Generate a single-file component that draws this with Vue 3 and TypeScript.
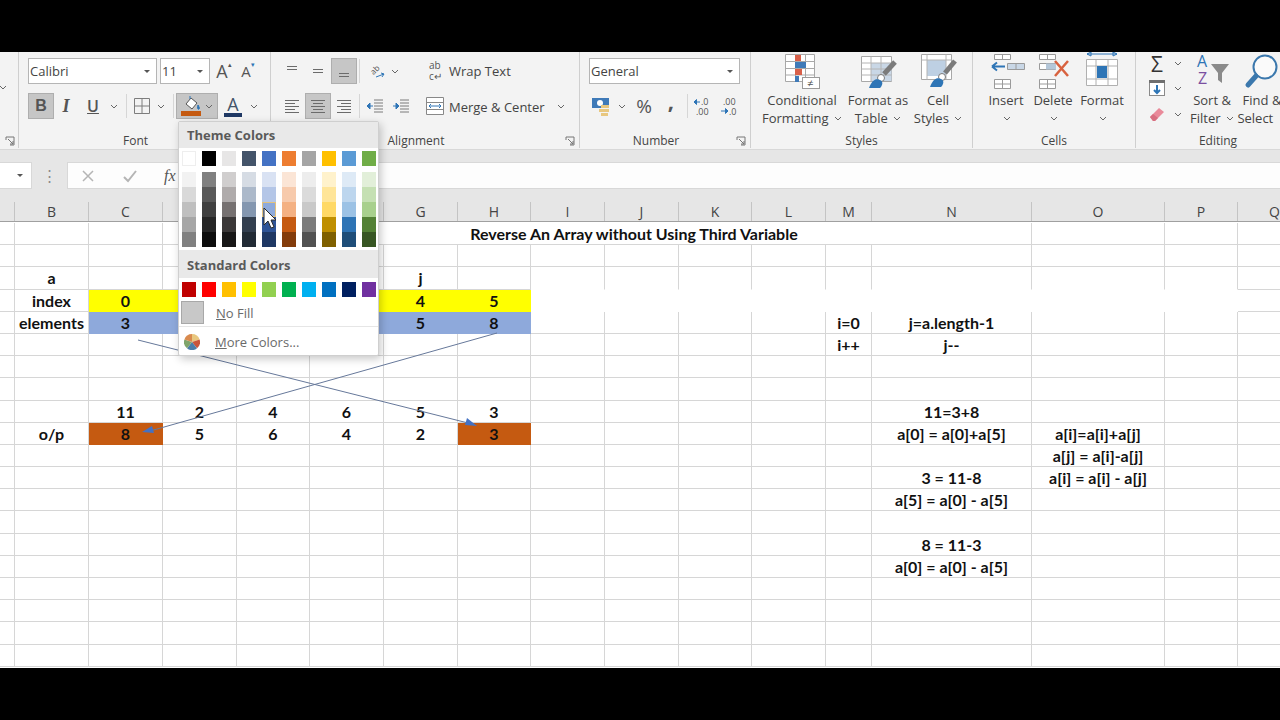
<template>
  <div class="page">
    <div class="black-bar"></div>

    <div class="ribbon">
      <section class="group clipboard">
        <div class="group-body paste"><svg class="chev" viewBox="0 0 8 5"><path d="M1 1l3 3 3-3" /></svg></div>
        <div class="group-foot"><span class="label"></span>
          <svg class="launcher" viewBox="0 0 10 10"><path d="M1 4V1h8v8H5M3 3l5 5M8 5v3H5" /></svg>
        </div>
      </section>

      <section class="group font-group">
        <div class="group-body stack">
          <div class="row">
            <div class="select font-name"><span>Calibri</span><i class="caret"></i></div>
            <div class="select font-size"><span>11</span><i class="caret"></i></div>
            <div class="tool grow-a">A<sup>▴</sup></div>
            <div class="tool shrink-a">A<sup class="blue">▾</sup></div>
          </div>
          <div class="row">
            <div class="tool active bold">B</div>
            <div class="tool italic">I</div>
            <div class="tool under">U</div>
            <svg class="chev mid" viewBox="0 0 8 5"><path d="M1 1l3 3 3-3" /></svg>
            <div class="sep font-sep"></div>
            <div class="tool">
              <svg width="16" height="16" viewBox="0 0 16 16"><path d="M.5.5h15v15H.5zM8 .5v15M.5 8h15" fill="none" stroke="#7d7d7d" /></svg>
            </div>
            <svg class="chev" viewBox="0 0 8 5"><path d="M1 1l3 3 3-3" /></svg>
            <div class="sep fill-sep"></div>
            <div class="tool active fill-btn">
              <svg width="22" height="22" viewBox="0 0 22 22">
                <path d="M6 9l5-6 6 5-5 6z" fill="#fff" stroke="#555" />
                <path d="M10 4V1M18 10c1 2 2 3 1 4s-2-1-1-4z" fill="#2e75b6" stroke="#2e75b6" />
                <rect x="1" y="16" width="20" height="5" fill="#c55a11" />
              </svg>
              <svg class="chev" viewBox="0 0 8 5"><path d="M1 1l3 3 3-3" /></svg>
            </div>
            <div class="tool font-colour">
              <span>A</span><b></b>
            </div>
            <svg class="chev colour-chev" viewBox="0 0 8 5"><path d="M1 1l3 3 3-3" /></svg>
          </div>
        </div>
        <div class="group-foot"><span class="label">Font</span><i class="launcher-gap"></i></div>
      </section>

      <section class="group align-group">
        <div class="group-body stack">
          <div class="row">
            <div v-for="(pos, i) in vAligns" :key="pos" class="tool" :class="{ active: i === 2 }">
              <svg width="16" height="16" viewBox="0 0 16 16">
                <path :d="pos" fill="none" stroke="#6b6b6b" />
              </svg>
            </div>
            <div class="sep align-sep"></div>
            <div class="tool orient">
              <svg class="open-svg" width="18" height="18" viewBox="0 0 18 18">
                <text x="2" y="11" font-size="8" fill="#555" transform="rotate(-45 6 9)">ab</text>
                <path d="M7 15l8-3M15 12l-3-1M15 12l-2 3" fill="none" stroke="#2e75b6" />
              </svg>
            </div>
            <svg class="chev orient-chev" viewBox="0 0 8 5"><path d="M1 1l3 3 3-3" /></svg>
            <div class="wrap-icon"><span>ab</span><span>c↵</span></div>
            <span class="wide-text">Wrap Text</span>
          </div>
          <div class="row">
            <div v-for="(lines, i) in hAligns" :key="lines" class="tool" :class="{ active: i === 1 }">
              <svg width="16" height="16" viewBox="0 0 16 16">
                <path :d="lines" fill="none" stroke="#6b6b6b" />
              </svg>
            </div>
            <div class="sep align-sep"></div>
            <div class="tool">
              <svg width="18" height="14" viewBox="0 0 18 14">
                <path d="M8 1h9M8 4h9M8 7h9M8 10h9M8 13h9" stroke="#7a7a7a" />
                <path d="M1 7h6M1 7l3-3v6z" stroke="#2e75b6" fill="#2e75b6" />
              </svg>
            </div>
            <div class="tool">
              <svg width="18" height="14" viewBox="0 0 18 14">
                <path d="M8 1h9M8 4h9M8 7h9M8 10h9M8 13h9" stroke="#7a7a7a" />
                <path d="M1 7h5M7 7L4 4v6z" stroke="#2e75b6" fill="#2e75b6" />
              </svg>
            </div>
            <svg class="merge-icon" viewBox="0 0 18 18">
              <path d="M.5.5h17v17H.5zM.5 5.500h17M.5 12.500h17" fill="#fff" stroke="#888" />
              <path d="M3 9h12M3 9l2-2M3 9l2 2M15 9l-2-2M15 9l-2 2" fill="none" stroke="#2e75b6" />
            </svg>
            <span class="wide-text low">Merge &amp; Center</span>
            <svg class="chev merge-chev" viewBox="0 0 8 5"><path d="M1 1l3 3 3-3" /></svg>
          </div>
        </div>
        <div class="group-foot"><span class="label">Alignment</span>
          <svg class="launcher" viewBox="0 0 10 10"><path d="M1 4V1h8v8H5M3 3l5 5M8 5v3H5" /></svg>
        </div>
      </section>

      <section class="group number-group">
        <div class="group-body stack">
          <div class="row">
            <div class="select number-format"><span>General</span><i class="caret"></i></div>
          </div>
          <div class="row">
            <div class="tool currency">
              <svg width="20" height="20" viewBox="0 0 20 20">
                <rect x="1" y="2" width="17" height="10" fill="#3f7ab8" />
                <circle cx="9" cy="7" r="3" fill="#fff" />
                <rect x="10" y="9" width="8" height="3" fill="#e8c77f" />
                <rect x="8" y="13" width="10" height="3" fill="#e8c77f" />
                <rect x="10" y="17" width="7" height="3" fill="#e8c77f" />
              </svg>
            </div>
            <svg class="chev currency-chev" viewBox="0 0 8 5"><path d="M1 1l3 3 3-3" /></svg>
            <div class="tool percent">%</div>
            <div class="tool comma">,</div>
            <div class="sep number-sep"></div>
            <div class="tool decimals">
              <svg class="open-svg" width="22" height="24" viewBox="0 0 22 24">
                <text x="9" y="11" font-size="9">.0</text>
                <text x="4" y="21" font-size="9">.00</text>
                <path d="M2 8h6M2 8l2.500-2.500v5z" stroke="#2e75b6" fill="#2e75b6" />
              </svg>
            </div>
            <div class="tool decimals">
              <svg class="open-svg" width="22" height="24" viewBox="0 0 22 24">
                <text x="5" y="11" font-size="9">.00</text>
                <text x="11" y="21" font-size="9">.0</text>
                <path d="M3 17h6M10 17l-2.500-2.500v5z" stroke="#2e75b6" fill="#2e75b6" />
              </svg>
            </div>
          </div>
        </div>
        <div class="group-foot"><span class="label">Number</span>
          <svg class="launcher" viewBox="0 0 10 10"><path d="M1 4V1h8v8H5M3 3l5 5M8 5v3H5" /></svg>
        </div>
      </section>

      <section class="group styles-group">
        <div class="group-body big-row">
          <div class="big" style="width: 86px">
            <svg class="big-icon" viewBox="0 0 38 38">
              <path d="M2.500 2.500h29v27h-29zM12.500 2.500v27M22.500 2.500v27M2.500 9.500h29M2.500 16.500h29M2.500 23h29" fill="#fff" stroke="#a8a8a8" />
              <rect x="12" y="3" width="6" height="6" fill="#d8604a" />
              <rect x="12" y="10" width="11" height="6" fill="#3f7ab8" />
              <rect x="12" y="17" width="7" height="6" fill="#d8604a" />
              <rect x="12" y="24" width="4" height="6" fill="#3f7ab8" />
              <rect x="19.500" y="25.500" width="17" height="11" fill="#fff" stroke="#9a9a9a" />
              <text x="24" y="35" font-size="11" fill="#555">≠</text>
            </svg>
            <span>Conditional</span>
            <span>Formatting <svg class="chev" viewBox="0 0 8 5"><path d="M1 1l3 3 3-3" /></svg></span>
          </div>
          <div class="big" style="width: 66px">
            <svg class="big-icon" viewBox="0 0 38 38">
              <path d="M2.500 4.500h30v25h-30z" fill="#fff" stroke="#a8a8a8" />
              <path d="M12 11h20.500v18H12z" fill="#c9d7e6" />
              <path d="M2.500 11h30M2.500 17h30M2.500 23h30M12 4.500v25M22 4.500v25" fill="none" stroke="#b4b4b4" />
              <path d="M36 10L25 22" stroke="#7b7b7b" stroke-width="5" />
              <circle cx="22" cy="26" r="3.500" fill="#fff" stroke="#7b7b7b" />
              <path d="M10 36c3-8 7-10 11-8s2 6 0 8z" fill="#2e75b6" />
            </svg>
            <span>Format as</span>
            <span>Table <svg class="chev" viewBox="0 0 8 5"><path d="M1 1l3 3 3-3" /></svg></span>
          </div>
          <div class="big" style="width: 54px">
            <svg class="big-icon" viewBox="0 0 38 38">
              <path d="M2.500 2.500h30v25h-30z" fill="#fff" stroke="#a8a8a8" />
              <path d="M8 8h19v16H8z" fill="#bed0e3" />
              <path d="M2.500 8h30M8 2.500v25M27 2.500v25" fill="none" stroke="#b4b4b4" />
              <path d="M36 9L26 21" stroke="#7b7b7b" stroke-width="5" />
              <circle cx="23" cy="25" r="3.500" fill="#fff" stroke="#7b7b7b" />
              <path d="M11 35c3-8 7-10 11-8s2 6 0 8z" fill="#2e75b6" />
            </svg>
            <span>Cell</span>
            <span>Styles <svg class="chev" viewBox="0 0 8 5"><path d="M1 1l3 3 3-3" /></svg></span>
          </div>
        </div>
        <div class="group-foot"><span class="label">Styles</span></div>
      </section>

      <section class="group cells-group">
        <div class="group-body big-row">
          <div class="big" style="width: 48px">
            <svg class="big-icon" viewBox="0 0 38 38">
              <path d="M7.500 2.500h16v5h-16zM15.500 2.500v5M7.500 27.500h16v9h-16zM15.500 27.500v9M7.500 32h16" fill="#fff" stroke="#9a9a9a" />
              <path d="M20.500 11.500h17v6h-17zM29 11.500v6" fill="#c9d7e6" stroke="#9a9a9a" />
              <path d="M5 14.500h13M5 14.500l5-4M5 14.500l5 4" fill="none" stroke="#2e75b6" stroke-width="2" />
            </svg>
            <span>Insert</span>
            <span><svg class="chev" viewBox="0 0 8 5"><path d="M1 1l3 3 3-3" /></svg></span>
          </div>
          <div class="big" style="width: 46px">
            <svg class="big-icon" viewBox="0 0 38 38">
              <path d="M5.500 2.500h16v5h-16zM13.500 2.500v5M5.500 27.500h16v9h-16zM13.500 27.500v9M5.500 32h16" fill="#fff" stroke="#9a9a9a" />
              <path d="M5.500 11.500h16v6h-16z" fill="#fff" stroke="#9a9a9a" />
              <path d="M12 11.500h10v6H12z" fill="#b4c7d9" />
              <path d="M21 9l13 15M34 9L21 24" stroke="#d8623f" stroke-width="2.500" />
            </svg>
            <span>Delete</span>
            <span><svg class="chev" viewBox="0 0 8 5"><path d="M1 1l3 3 3-3" /></svg></span>
          </div>
          <div class="big" style="width: 52px">
            <svg class="big-icon" viewBox="0 0 38 38">
              <path d="M4 2h30M8 0v4M30 0v4M4 2l4-2M4 2l4 2M34 2l-4-2M34 2l-4 2" fill="none" stroke="#2e75b6" />
              <path d="M3.500 7.500h31v26h-31zM13 7.500v26M25 7.500v26M3.500 14h31M3.500 27h31" fill="#fff" stroke="#b0b0b0" />
              <rect x="14" y="14" width="10" height="12" fill="#2e75b6" />
            </svg>
            <span>Format</span>
            <span><svg class="chev" viewBox="0 0 8 5"><path d="M1 1l3 3 3-3" /></svg></span>
          </div>
        </div>
        <div class="group-foot"><span class="label">Cells</span></div>
      </section>

      <section class="group editing-group">
        <div class="group-body big-row">
          <div class="edit-tools">
            <div class="edit-line sum"><span class="sigma">Σ</span><svg class="chev" viewBox="0 0 8 5"><path d="M1 1l3 3 3-3" /></svg></div>
            <div class="edit-line">
              <svg class="edit-icon" viewBox="0 0 16 16">
                <rect x=".5" y=".5" width="15" height="15" fill="#fff" stroke="#8a8a8a" />
                <rect x="0" y="0" width="16" height="3" fill="#6f6f6f" />
                <path d="M8 5v8M5 10l3 3 3-3" fill="none" stroke="#2e75b6" stroke-width="2" />
              </svg>
              <svg class="chev" viewBox="0 0 8 5"><path d="M1 1l3 3 3-3" /></svg>
            </div>
            <div class="edit-line">
              <svg class="edit-icon" viewBox="0 0 16 16"><path d="M1 11l9-9 5 4-9 9H4z" fill="#e98a9a" /><path d="M1 11l3-3 5 4-3 3H4z" fill="#d76f80" /></svg>
              <svg class="chev" viewBox="0 0 8 5"><path d="M1 1l3 3 3-3" /></svg>
            </div>
          </div>
          <div class="big" style="width: 52px">
            <svg class="big-icon open-svg" viewBox="0 0 38 38">
              <text x="4" y="15" font-size="16" fill="#2e75b6">A</text>
              <text x="5" y="32" font-size="16" fill="#7b4fa0">Z</text>
              <path d="M18 12h18l-7 9v10l-4-3v-7z" fill="#8a8a8a" />
            </svg>
            <span>Sort &amp;</span>
            <span>Filter <svg class="chev" viewBox="0 0 8 5"><path d="M1 1l3 3 3-3" /></svg></span>
          </div>
          <div class="big" style="width: 48px">
            <svg class="big-icon" viewBox="0 0 38 38">
              <circle cx="22" cy="15" r="11.500" fill="#fff" fill-opacity=".6" stroke="#3b78ad" stroke-width="2" />
              <path d="M13 24L5 33" stroke="#3b78ad" stroke-width="5" stroke-linecap="round" />
            </svg>
            <span>Find &amp;</span>
            <span>Select <svg class="chev" viewBox="0 0 8 5"><path d="M1 1l3 3 3-3" /></svg></span>
          </div>
        </div>
        <div class="group-foot"><span class="label">Editing</span></div>
      </section>
    </div>

    <div class="formula">
      <div class="name-box"><i class="caret"></i></div>
      <div class="dots">⋮</div>
      <div class="formula-box">
        <svg class="f-icon" viewBox="0 0 14 14"><path d="M2 2l10 10M12 2L2 12" stroke="#b5b5b5" stroke-width="1.500" /></svg>
        <svg class="f-icon check" viewBox="0 0 16 14"><path d="M2 8l4 4 8-10" fill="none" stroke="#b5b5b5" stroke-width="2" /></svg>
        <span class="fx">fx</span>
      </div>
    </div>

    <div class="col-head sheet-cols">
      <div v-for="col in columns" :key="col" class="head-cell">{{ col }}</div>
    </div>

    <div class="sheet sheet-cols">
      <div v-for="cell in cells" :key="cell.key" class="cell" :class="cell.classes">{{ cell.text }}</div>
    </div>

    <div class="black-bar"></div>

    <svg class="arrows" viewBox="0 0 1280 720">
      <path d="M138 340L472 424" stroke="#66789a" stroke-width="1" fill="none" />
      <path d="M477 426l-10-8-2 7z" fill="#4472c4" />
      <path d="M497 333L150 431" stroke="#66789a" stroke-width="1" fill="none" />
      <path d="M142 432l10-6 2 7z" fill="#4472c4" />
    </svg>

    <div class="fill-menu">
      <div class="menu-title">Theme Colors</div>
      <div class="swatches base-row">
        <i v-for="col in themeColors" :key="col.base" class="swatch" :class="{ blank: col.base === '#ffffff' }" :style="{ background: col.base }"></i>
      </div>
      <div class="swatches tint-row">
        <div v-for="(col, c) in themeColors" :key="col.base" class="tint-col">
          <i v-for="(tint, t) in col.tints" :key="t" class="tint" :class="{ hover: c === 4 && t === 2 }" :style="{ background: tint }"></i>
        </div>
      </div>
      <div class="menu-title second">Standard Colors</div>
      <div class="swatches std-row">
        <i v-for="colour in standardColors" :key="colour" class="swatch" :style="{ background: colour }"></i>
      </div>
      <div class="menu-item no-fill">
        <i class="no-fill-box"></i>
        <span><u>N</u>o Fill</span>
      </div>
      <div class="menu-item more">
        <svg class="wheel" viewBox="0 0 16 16">
          <path d="M8 8V0a8 8 0 0 1 7.600 5.500z" fill="#e8c77f" />
          <path d="M8 8l7.600-2.500A8 8 0 0 1 13 14.200z" fill="#c9563a" />
          <path d="M8 8l5 6.200A8 8 0 0 1 3 14.200z" fill="#4b7ea8" />
          <path d="M8 8l-5 6.200A8 8 0 0 1 .4 5.500z" fill="#7fa46a" />
          <path d="M8 8L.4 5.500A8 8 0 0 1 8 0z" fill="#d98a4e" />
        </svg>
        <span><u>M</u>ore Colors...</span>
      </div>
    </div>

    <svg class="cursor" viewBox="0 0 14 22">
      <path d="M1 1v17l4-4 3 7 3-1-3-7h5z" fill="#fff" stroke="#2b2b2b" stroke-width="1" />
    </svg>
  </div>
</template>

<script setup lang="ts">
import { computed } from 'vue';

interface Cell {
  key: string;
  text: string;
  classes: string[];
}

const columns = ['', 'B', 'C', 'D', 'E', 'F', 'G', 'H', 'I', 'J', 'K', 'L', 'M', 'N', 'O', 'P', 'Q'];
const rowCount = 20;

const vAligns = ['M3 3.500h10M3 6.500h10', 'M3 6.500h10M3 9.500h10', 'M3 10.500h10M3 13.500h10'];
const hAligns = [
  'M1 2.500h14M1 5.500h10M1 8.500h14M1 11.500h10M1 14.500h14',
  'M1 2.500h14M3 5.500h10M1 8.500h14M3 11.500h10M1 14.500h14',
  'M1 2.500h14M5 5.500h10M1 8.500h14M5 11.500h10M1 14.500h14',
];

const sheetData: Record<number, Record<string, string>> = {
  2: { B: 'a', G: 'j' },
  3: { B: 'index', C: '0', D: '1', E: '2', F: '3', G: '4', H: '5' },
  4: { B: 'elements', C: '3', D: '2', E: '4', F: '6', G: '5', H: '8', M: 'i=0', N: 'j=a.length-1' },
  5: { M: 'i++', N: 'j--' },
  8: { C: '11', D: '2', E: '4', F: '6', G: '5', H: '3', N: '11=3+8' },
  9: { B: 'o/p', C: '8', D: '5', E: '6', F: '4', G: '2', H: '3', N: 'a[0] = a[0]+a[5]', O: 'a[i]=a[i]+a[j]' },
  10: { O: 'a[j] = a[i]-a[j]' },
  11: { N: '3 = 11-8', O: 'a[i] = a[i] - a[j]' },
  12: { N: 'a[5] = a[0] - a[5]' },
  14: { N: '8 = 11-3' },
  15: { N: 'a[0] = a[0] - a[5]' },
};

const filled = 'CDEFGH';
const cleared = 'IJKLMNOP';

function cellClasses(row: number, col: string): string[] {
  const list: string[] = [];
  if (row === 3 && filled.includes(col) && col) list.push('yellow');
  if (row === 4 && filled.includes(col) && col) list.push('blue');
  if (row === 9 && (col === 'C' || col === 'H')) list.push('orange');
  if (row === 3 && cleared.includes(col) && col) list.push('cleared');
  if (row === 2 && cleared.includes(col) && col) list.push('no-bottom');
  return list;
}

// row 0 holds the merged title across E..N
const cells = computed<Cell[]>(() => {
  const out: Cell[] = [];
  for (let row = 0; row < rowCount; row++) {
    for (const col of columns) {
      if (row === 0 && 'FGHIJKLMN'.includes(col) && col) continue;
      if (row === 0 && col === 'E') {
        out.push({ key: 'title', text: 'Reverse An Array without Using Third Variable', classes: ['title'] });
        continue;
      }
      out.push({ key: `${col || 'A'}${row}`, text: sheetData[row]?.[col] ?? '', classes: cellClasses(row, col) });
    }
  }
  return out;
});

const themeColors = [
  { base: '#ffffff', tints: ['#f2f2f2', '#d9d9d9', '#bfbfbf', '#a6a6a6', '#808080'] },
  { base: '#000000', tints: ['#808080', '#595959', '#404040', '#262626', '#0d0d0d'] },
  { base: '#e7e6e6', tints: ['#d0cece', '#afabab', '#767171', '#3b3838', '#181717'] },
  { base: '#44546a', tints: ['#d6dce4', '#acb9ca', '#8497b0', '#333f4f', '#222b35'] },
  { base: '#4472c4', tints: ['#d9e2f3', '#b4c6e7', '#8eaadb', '#2f5496', '#1f3864'] },
  { base: '#ed7d31', tints: ['#fbe5d6', '#f7caac', '#f4b183', '#c55a11', '#833c0b'] },
  { base: '#a5a5a5', tints: ['#ededed', '#dbdbdb', '#c9c9c9', '#7b7b7b', '#525252'] },
  { base: '#ffc000', tints: ['#fff2cc', '#ffe599', '#ffd966', '#bf8f00', '#7f6000'] },
  { base: '#5b9bd5', tints: ['#deeaf6', '#bdd6ee', '#9cc2e5', '#2e74b5', '#1f4e79'] },
  { base: '#70ad47', tints: ['#e2efd9', '#c5e0b3', '#a8d08d', '#538135', '#375623'] },
];

const standardColors = ['#c00000', '#ff0000', '#ffc000', '#ffff00', '#92d050', '#00b050', '#00b0f0', '#0070c0', '#002060', '#7030a0'];
</script>

<style>
body {
  margin: 0;
  background: #000;
}
</style>

<style scoped>
.page {
  position: relative;
  display: flex;
  flex-direction: column;
  width: 1280px;
  height: 720px;
  overflow: hidden;
  font-family: "Open Sans", "Noto Sans", sans-serif;
  color: #444;
  background: #fff;
}

.black-bar {
  flex: none;
  height: 52px;
  background: #000;
}

.ribbon {
  display: flex;
  flex: none;
  height: 98px;
  overflow: hidden;
  background: #f3f3f3;
  border-bottom: 1px solid #d8d8d8;
  box-sizing: border-box;
}

.group {
  display: flex;
  flex: none;
  flex-direction: column;
  height: 96px;
  box-sizing: border-box;
  border-right: 1px solid #cfcfcf;
}

.clipboard { width: 19px; }
.font-group { width: 252px; }
.align-group { width: 309px; }
.number-group { width: 171px; }
.styles-group { width: 222px; }
.cells-group { width: 163px; }
.editing-group { width: 164px; border-right: 0; }

.group-body {
  height: 82px;
}

.open-svg { overflow: visible; }

.paste {
  padding-top: 33px;
  box-sizing: border-box;
}

.paste .chev {
  display: block;
  margin: 0 0 0 -1px;
}

.stack {
  display: flex;
  flex-direction: column;
  gap: 9px;
  padding-top: 6px;
  box-sizing: border-box;
}

.font-group .stack { padding-left: 9px; }
.align-group .stack { padding-left: 8px; }
.number-group .stack { padding-left: 9px; }

.row {
  display: flex;
  align-items: center;
  height: 26px;
}

.group-foot {
  display: flex;
  align-items: center;
  height: 14px;
}

.label {
  flex: 1;
  font-size: 12px;
  line-height: 14px;
  text-align: center;
  color: #444;
}

.launcher {
  flex: none;
  width: 10px;
  height: 10px;
  margin: 0 4px;
  fill: none;
  stroke: #777;
}

.clipboard .launcher { margin: 0 4px 0 5px; }

.launcher-gap {
  flex: none;
  width: 18px;
}

.select {
  display: flex;
  align-items: center;
  justify-content: space-between;
  height: 26px;
  padding: 0 4px 0 1px;
  box-sizing: border-box;
  font-size: 13px;
  background: #fff;
  border: 1px solid #b5b5b5;
}

.font-name { width: 129px; }
.font-size { width: 50px; margin-left: 3px; }
.number-format { width: 151px; }

.caret {
  display: block;
  width: 0;
  height: 0;
  margin-right: 2px;
  border: 3px solid transparent;
  border-top: 3px solid #555;
  border-bottom: 0;
}

.tool {
  display: flex;
  flex: none;
  align-items: center;
  justify-content: center;
  width: 26px;
  height: 26px;
  box-sizing: border-box;
  color: #555;
}

.tool.active {
  background: #c6c6c6;
  border: 1px solid #aeaeae;
}

.grow-a {
  margin-left: 1px;
  font-size: 18px;
}

.shrink-a {
  margin-left: -2px;
  font-size: 15px;
}

.tool sup {
  font-size: 7px;
  line-height: 0;
  vertical-align: top;
  margin-top: -12px;
  color: #555;
}

.tool sup.blue { color: #2e75b6; }

.bold {
  font-family: "Liberation Sans", sans-serif;
  font-size: 16px;
  font-weight: 700;
}

.italic {
  margin-left: -1px;
  margin-right: 1px;
  font-family: "Liberation Serif", serif;
  font-size: 18px;
  font-style: italic;
  font-weight: 700;
}

.under {
  font-size: 16px;
  font-weight: 600;
  text-decoration: underline;
}

.chev {
  flex: none;
  width: 8px;
  height: 5px;
  margin: 0 2px;
  fill: none;
  stroke: #666;
}

.mid { margin-left: 4px; }
.colour-chev { margin-left: 4px; }

.sep {
  flex: none;
  width: 1px;
  height: 24px;
  background: #d6d6d6;
}

.font-sep { margin: 0 2px 0 6px; }
.fill-sep { margin: 0 2px 0 6px; }
.align-sep { margin: 0 2px 0 2px; }

.fill-btn {
  gap: 0;
  width: 42px;
  padding-left: 1px;
}

.fill-btn .chev { margin: 0 3px 0 3px; }

.font-colour {
  flex-direction: column;
  margin-left: 2px;
  font-size: 18px;
  line-height: 17px;
  font-weight: 500;
  color: #44546a;
}

.font-colour b {
  display: block;
  width: 18px;
  height: 4px;
  background: #1f3864;
}

.orient { margin-left: 3px; }
.orient-chev { margin-left: 0; }

.wrap-icon {
  display: flex;
  flex-direction: column;
  width: 16px;
  margin-left: 28px;
  font-size: 10px;
  line-height: 11px;
  color: #555;
}

.wide-text {
  margin-left: 4px;
  font-size: 13px;
  white-space: nowrap;
}

.low { margin-top: 2px; }

.merge-icon {
  flex: none;
  width: 18px;
  height: 18px;
  margin-left: 12px;
}

.merge-icon + .wide-text { margin-left: 5px; }
.merge-chev { margin-left: 12px; }

.currency-chev { margin-left: 5px; }

.percent {
  margin-left: 3px;
  font-size: 19px;
}

.comma {
  margin-left: 1px;
  font-size: 22px;
  font-weight: 700;
  line-height: 14px;
  align-items: flex-start;
}

.number-sep { margin: 0 2px 0 3px; }

.currency { width: 24px; }

.decimals text {
  font-family: "Open Sans", sans-serif;
  fill: #555;
}

.big-row {
  display: flex;
}

.styles-group .big-row { padding-left: 8px; }
.cells-group .big-row { padding-left: 9px; }
.editing-group .big-row { padding-left: 10px; }

.big {
  display: flex;
  flex: none;
  flex-direction: column;
  align-items: center;
  font-size: 13px;
  line-height: 18px;
  white-space: nowrap;
}

.big .chev { margin: 0 0 2px 2px; }

.big-icon {
  display: block;
  width: 38px;
  height: 38px;
  margin-bottom: 1px;
}

.edit-tools {
  display: flex;
  flex: none;
  flex-direction: column;
  width: 40px;
}

.edit-line {
  display: flex;
  align-items: center;
  height: 26px;
}

.edit-line .chev { margin-left: 6px; }

.sum { height: 23px; }

.sigma {
  width: 22px;
  font-size: 21px;
  line-height: 18px;
  text-align: center;
  color: #333;
}

.edit-icon {
  flex: none;
  width: 16px;
  height: 16px;
  margin: 0 3px;
}

.formula {
  display: flex;
  flex: none;
  height: 40px;
  padding-top: 12px;
  box-sizing: border-box;
  background: #e6e6e6;
}

.name-box {
  display: flex;
  align-items: center;
  justify-content: flex-end;
  width: 32px;
  height: 27px;
  padding-right: 6px;
  box-sizing: border-box;
  background: #fff;
  border: 1px solid #d8d8d8;
  border-left: 0;
}

.dots {
  width: 35px;
  font-size: 15px;
  line-height: 27px;
  text-align: center;
  color: #8a8a8a;
}

.formula-box {
  display: flex;
  flex: 1;
  align-items: center;
  height: 27px;
  box-sizing: border-box;
  background: #fdfdfd;
  border: 1px solid #d8d8d8;
  border-right: 0;
}

.f-icon {
  width: 14px;
  height: 14px;
  margin-left: 13px;
}

.check {
  width: 16px;
  margin-left: 27px;
}

.fx {
  margin-left: 26px;
  font-family: "Liberation Serif", serif;
  font-size: 16px;
  font-style: italic;
  color: #555;
}

.sheet-cols {
  display: grid;
  grid-template-columns: 15px 74px 74px 74px 73px 74px 74px 73px 74px 74px 73px 74px 46px 160px 133px 73px 74px;
}

.col-head {
  flex: none;
  height: 32px;
  padding-top: 12px;
  box-sizing: border-box;
  background: #e6e6e6;
  border-bottom: 1px solid #a0a0a0;
}

.head-cell {
  font-size: 14px;
  line-height: 19px;
  text-align: center;
  color: #444;
  border-right: 1px solid #c4c4c4;
}

.sheet {
  flex: 1;
  min-height: 0;
  padding-top: 1px;
  box-sizing: border-box;
  overflow: hidden;
  grid-auto-rows: 22.2px;
  align-content: start;
  background: #fff;
}

.cell {
  display: flex;
  align-items: center;
  justify-content: center;
  min-width: 0;
  box-sizing: border-box;
  font-family: Lato, "Liberation Sans", sans-serif;
  font-size: 16px;
  font-weight: 700;
  white-space: nowrap;
  color: #111;
  border-right: 1px solid #d6d6d6;
  border-bottom: 1px solid #d6d6d6;
}

.title { grid-column: span 10; }

.yellow { background: #ffff00; border-color: #ffff00; }
.blue { background: #8ea9db; border-color: #8ea9db; }
.orange { background: #c55a11; border-color: #c55a11; }
.cleared { border-color: #fff; }
.no-bottom { border-bottom-color: #fff; }

.arrows {
  position: absolute;
  top: 0;
  left: 0;
  width: 1280px;
  height: 720px;
  pointer-events: none;
}

.fill-menu {
  position: absolute;
  top: 121px;
  left: 178px;
  display: flex;
  flex-direction: column;
  width: 201px;
  height: 235px;
  box-sizing: border-box;
  background: #fff;
  border: 1px solid #cfcfcf;
  border-radius: 2px;
  box-shadow: 2px 3px 8px rgba(0, 0, 0, 0.22);
}

.menu-title {
  height: 26px;
  padding-left: 8px;
  font-size: 13px;
  font-weight: 700;
  line-height: 26px;
  color: #5a5a5a;
  background: #e9e9e9;
}

.swatches {
  display: grid;
  grid-template-columns: repeat(10, 14px);
  gap: 6px;
  padding-left: 3px;
}

.swatch {
  display: block;
  height: 15px;
}

.swatch.blank { outline: 1px solid #eee; outline-offset: -1px; }

.base-row { margin-top: 3px; }
.tint-row { margin-top: 6px; }

.tint {
  display: block;
  height: 15px;
  box-sizing: border-box;
}

.tint.hover { border: 1px solid #e2c27f; }

.second { margin-top: 3px; height: 28px; line-height: 30px; }

.std-row { margin-top: 4px; }

.menu-item {
  display: flex;
  align-items: center;
  font-size: 13px;
  color: #6a6a6a;
}

.no-fill {
  height: 27px;
  margin-top: 3px;
  border-bottom: 1px solid #e6e6e6;
}

.no-fill-box {
  display: block;
  width: 23px;
  height: 23px;
  margin: 0 12px 0 2px;
  box-sizing: border-box;
  background: #c8c8c8;
  border: 1px solid #a8a8a8;
}

.more {
  height: 30px;
  padding-top: 2px;
  box-sizing: border-box;
}

.wheel {
  width: 16px;
  height: 16px;
  margin: 0 15px 0 5px;
}

.cursor {
  position: absolute;
  top: 207px;
  left: 263px;
  width: 14px;
  height: 22px;
}
</style>
